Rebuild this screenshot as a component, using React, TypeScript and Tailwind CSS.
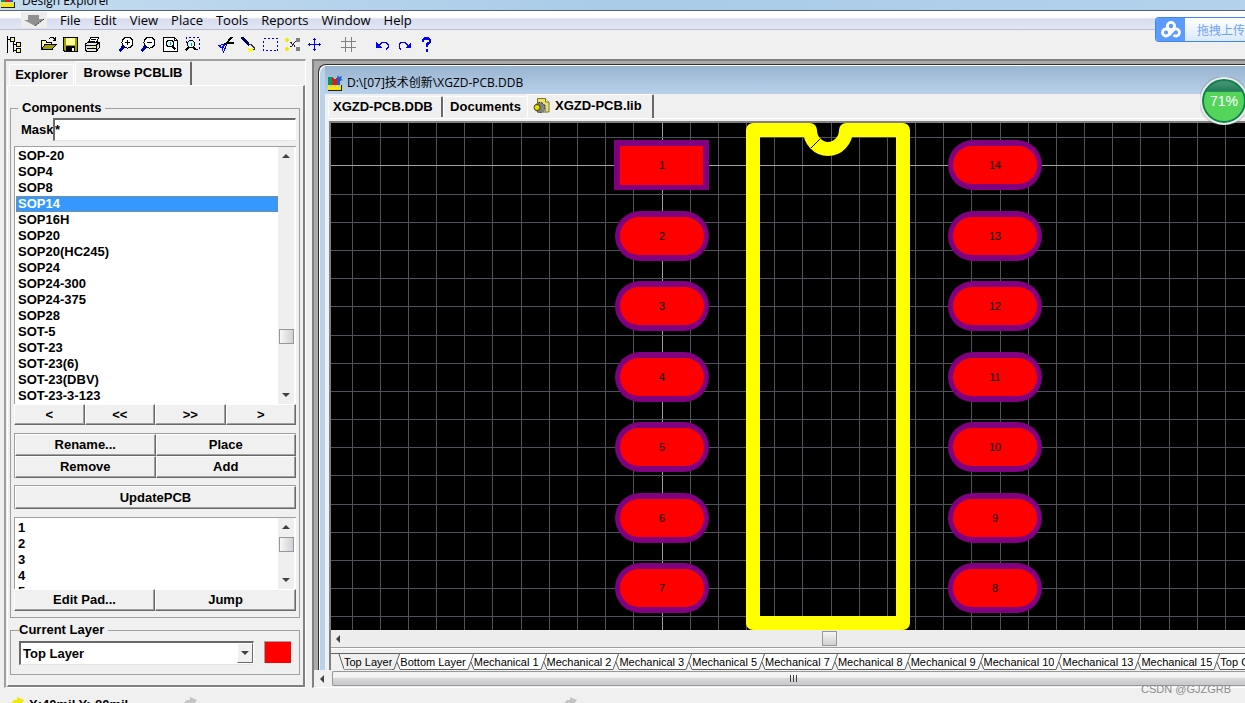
import { useState } from "react";
import type { ReactNode } from "react";

const components = [
  "SOP-20", "SOP4", "SOP8", "SOP14", "SOP16H", "SOP20", "SOP20(HC245)", "SOP24",
  "SOP24-300", "SOP24-375", "SOP28", "SOT-5", "SOT-23", "SOT-23(6)", "SOT-23(DBV)", "SOT-23-3-123",
];
const menus = ["File", "Edit", "View", "Place", "Tools", "Reports", "Window", "Help"];
const layers = [
  "Top Layer", "Bottom Layer", "Mechanical 1", "Mechanical 2", "Mechanical 3", "Mechanical 5",
  "Mechanical 7", "Mechanical 8", "Mechanical 9", "Mechanical 10", "Mechanical 13", "Mechanical 15",
  "Top Overlay",
];

// grid pitch and pad pitch in canvas units, origin is the centre of pad 1
const GRID = 28.17;
const PAD = 70.5;

const icons: { name: string; art: ReactNode }[][] = [
  [
    {
      name: "Panel",
      art: (
        <g fill="none" stroke="#000">
          <path d="M1.5 0v17M1.5 3.5h3M7.5 6v10M7.5 8.5h3M7.5 14.5h3" />
          <path d="M4.5 1.5h4v4h-4zM10.5 6.5h4v4h-4zM10.5 12.5h4v4h-4z" fill="#ffff66" />
        </g>
      ),
    },
  ],
  [
    {
      name: "Open",
      art: (
        <g stroke="#000">
          <path d="M1.5 13.5v-9h4l1 1.5h5v3" fill="#ffff99" />
          <path d="M1.5 13.5l3.5-5h11l-4 5z" fill="#a0a000" />
          <path d="M9 3l2-1.5h2l2 2M15.5 1v3h-3" fill="none" />
        </g>
      ),
    },
    {
      name: "Save",
      art: (
        <g>
          <path d="M1.5 1.5h14v14H3l-1.5-1.5z" fill="#a0a000" stroke="#000" />
          <path d="M4 2h9v7H4z" fill="#ffff99" />
          <path d="M4 10h9v6H4z" fill="#000" />
          <path d="M10 12h2v3h-2z" fill="#fff" />
        </g>
      ),
    },
    {
      name: "Print",
      art: (
        <g stroke="#000">
          <path d="M4.5 7l2-5.5h8L12.5 7" fill="#fff" />
          <path d="M7 3.5h5M6 5.5h5" />
          <path d="M1.5 8l2.5-2h11v6l-3 3.5H3L1.5 14z" fill="#e4e4e4" />
          <path d="M1.5 9.5h10.5l3-3M3 12.5h9M12.5 10v5" fill="none" />
          <path d="M8 11h2" stroke="#e0e000" />
        </g>
      ),
    },
  ],
  [
    {
      name: "Zoom In",
      art: (
        <g fill="none" stroke="#000">
          <circle cx="9.5" cy="6.5" r="5.5" fill="#fff" />
          <path d="M9.5 4v5M7 6.5h5" />
          <path d="M5.5 10.5l-4 4.5" stroke="#0000a8" strokeWidth="3" />
        </g>
      ),
    },
    {
      name: "Zoom Out",
      art: (
        <g fill="none" stroke="#000">
          <circle cx="9.5" cy="6.5" r="5.5" fill="#fff" />
          <path d="M7 6.5h5" />
          <path d="M5.5 10.5l-4 4.5" stroke="#0000a8" strokeWidth="3" />
        </g>
      ),
    },
    {
      name: "Fit Document",
      art: (
        <g fill="none" stroke="#000">
          <path d="M1.5 1.5h11l3 3v11h-14z" fill="#fff" />
          <path d="M12.5 1.5v3h3" />
          <circle cx="8" cy="7.5" r="3.5" fill="#d8f4f4" />
          <path d="M8 6v3" stroke="#00a0a0" />
          <path d="M10.5 10.5l3 3" strokeWidth="2" />
        </g>
      ),
    },
    {
      name: "Zoom Area",
      art: (
        <g fill="none" stroke="#000">
          <path d="M2.5 7V1.5h13v12H11" stroke="#0000a8" strokeDasharray="2 2" />
          <circle cx="7" cy="8" r="3.5" fill="#d8f4f4" />
          <path d="M7 6.5v3" stroke="#00a0a0" />
          <path d="M4.5 11l-3 3.5M9.5 11l2.5 3" strokeWidth="2" />
        </g>
      ),
    },
  ],
  [
    {
      name: "Cut",
      art: (
        <g fill="none" stroke="#000">
          <path d="M14 1L7 9" strokeWidth="2" />
          <path d="M16 7H9L6 9" strokeWidth="2" />
          <path d="M7 8l-6 1.5 2 2 4-2.5-3 4 1.5 3L8.5 9" stroke="#0000ff" />
        </g>
      ),
    },
    {
      name: "Paste",
      art: (
        <g>
          <path d="M1 1h2l6 6v3H8L1 3z" fill="#000060" />
          <path d="M9 8.5h2l3.5 3.5v1.5h-2" fill="none" stroke="#303030" />
          <path d="M8 12h2v1h2v-1h1v2h-1v2H8v-1h1v-1H8z" fill="#ffff00" />
        </g>
      ),
    },
    {
      name: "Select",
      art: <path d="M1.5 2.5h14v12h-14z" fill="none" stroke="#0000c0" strokeDasharray="2 2" />,
    },
    {
      name: "Deselect",
      art: (
        <g>
          <path d="M4 4l5 4.5L4 13M14 3L9 8.5l5 5.5" fill="none" stroke="#202020" strokeDasharray="2 1" />
          <path d="M2 2h2v1h1v2H4v1H2V5H1V3h1zM2 11h2v1h1v2H4v1H2v-1H1v-2h1z" fill="#f0e800" />
          <circle cx="14" cy="4" r="2.5" fill="#808080" />
          <circle cx="14" cy="13" r="2.5" fill="#808080" />
        </g>
      ),
    },
    {
      name: "Move",
      art: (
        <g stroke="#0000e0" fill="none">
          <path d="M8.5 2v13M2 8.5h13" />
          <path d="M7 3.5h3M7 13.5h3M3.5 7v3M13.5 7v3" />
        </g>
      ),
    },
  ],
  [
    {
      name: "Grid",
      art: <path d="M5.5 1v15M11.5 1v15M1 5.5h15M1 11.5h15" fill="none" stroke="#808080" />,
    },
  ],
  [
    {
      name: "Undo",
      art: (
        <g fill="none" stroke="#0000ff">
          <path d="M5 9.5l3-3h4l2 2v3l-2 2" />
          <path d="M2 6v6h6z" fill="#0000ff" stroke="none" />
        </g>
      ),
    },
    {
      name: "Redo",
      art: (
        <g fill="none" stroke="#0000ff">
          <path d="M12 9.5l-3-3H5l-2 2v3l2 2" />
          <path d="M15 6v6H9z" fill="#0000ff" stroke="none" />
        </g>
      ),
    },
    {
      name: "Help",
      art: (
        <g fill="none" stroke="#0000ff" strokeWidth="2.5">
          <path d="M5 6V4l2-1.5h3L12 4v2L9 8.5V11" />
          <path d="M9 13v2.5" />
        </g>
      ),
    },
  ],
];

function Arrow({ dir }: { dir: "up" | "down" | "left" }) {
  const d = { up: "M0 6l4-4 4 4z", down: "M0 2l4 4 4-4z", left: "M6 0L2 4l4 4z" }[dir];
  return (
    <svg width="8" height="8" viewBox="0 0 8 8" aria-hidden="true">
      <path d={d} fill="#404040" />
    </svg>
  );
}

function PushButton({ children }: { children: ReactNode }) {
  return (
    <button className="flex-1 border border-t-white border-l-white border-r-[#696969] border-b-[#696969] bg-[#f0f0f0] text-center font-bold leading-4 shadow-[inset_-1px_-1px_0_#a0a0a0]">
      {children}
    </button>
  );
}

function ScrollTrack({ gap }: { gap: string }) {
  return (
    <div className="mr-[2px] flex w-4 flex-col items-center bg-[#efefef] py-[5px]">
      <Arrow dir="up" />
      <div className={gap} />
      <div className="h-[15px] w-[15px] shrink-0 border border-[#979797] bg-gradient-to-r from-[#f6f6f6] to-[#d0d0d4]" />
      <div className="flex-1" />
      <Arrow dir="down" />
    </div>
  );
}

function AppLogo() {
  return (
    <svg width="16" height="16" viewBox="0 0 16 16" className="shrink-0" aria-hidden="true">
      <path d="M1 2h5v8H1z" fill="#109060" />
      <path d="M5 3h2v1h2V3h2v3h-1v2h1v3H9v-1H7v1H5V8h1V6H5z" fill="#e01818" />
      <path d="M11 0l1 2 3-1-1 3 2 1-3 1v4h-3V3z" fill="#1860d0" />
      <path d="M1 10h2v2h2v-2h2v2h2v-2h2v2h2v-2h1v5H1z" fill="#f8e800" />
      <path d="M1 15h13v1H1zM14 10h1v6h-1z" fill="#202020" />
    </svg>
  );
}

function LibIcon() {
  return (
    <svg width="17" height="16" viewBox="0 0 17 16" className="shrink-0" aria-hidden="true">
      <path d="M4.5.5h8l3.5 3.5v10H4.5z" fill="#e8e070" stroke="#807810" />
      <path d="M12.5.5v3.5h3.5" fill="#fff" stroke="#807810" />
      <circle cx="7" cy="9.5" r="5" fill="#808080" stroke="#303030" strokeDasharray="2 1" />
      <circle cx="4" cy="9.5" r="3" fill="#e8e000" stroke="#404000" />
      <path d="M10 8v7M12.5 7v8" stroke="#909090" />
    </svg>
  );
}

function StatusMark({ fill }: { fill: string }) {
  return (
    <svg width="14" height="10" viewBox="0 0 14 10" className="shrink-0" aria-hidden="true">
      <path d="M0 6l3-3h3V0l7 3-4 6H2z" fill={fill} />
    </svg>
  );
}

function Pad({ n, x, y }: { n: number; x: number; y: number }) {
  return (
    <g>
      {n === 1 ? (
        <>
          <rect x={x - 48} y={y - 25} width="95" height="50" fill="#800080" />
          <rect x={x - 42} y={y - 19} width="83" height="39" fill="#f00" />
        </>
      ) : (
        <>
          <rect x={x - 47} y={y - 25} width="94" height="50" rx="25" fill="#800080" />
          <rect x={x - 42} y={y - 19} width="84" height="38" rx="19" fill="#f00" />
        </>
      )}
      <text x={x} y={y + 4} textAnchor="middle" fontSize="11" fill="#000">
        {n}
      </text>
    </g>
  );
}

function Canvas() {
  const cols = Array.from({ length: 80 }, (_, i) => i - 11);
  const rows = Array.from({ length: 60 }, (_, i) => i - 1);
  const left = [1, 2, 3, 4, 5, 6, 7];

  return (
    <svg className="block h-full w-full bg-black" role="img" aria-label="SOP14 footprint">
      <g shapeRendering="crispEdges">
        {cols.map((c) => (
          <rect key={c} x={331 + Math.floor(c * GRID)} y="0" width="1" height="100%" fill={c === 0 ? "#a0a0a0" : "#50505e"} />
        ))}
        {rows.map((r) => (
          <rect key={r} x="0" y={42 + Math.ceil(r * GRID)} width="100%" height="1" fill={r === 0 ? "#a0a0a0" : "#50505e"} />
        ))}
      </g>
      <path
        d="M479 7H422V500H572V7H515A18 19 0 0 1 479 7"
        fill="none"
        stroke="#ff0"
        strokeWidth="14"
        strokeLinecap="round"
        strokeLinejoin="round"
      />
      <path d="M480 25l9-9" stroke="#000" />
      {left.map((n) => (
        <Pad key={n} n={n} x={331} y={42 + Math.round((n - 1) * PAD)} />
      ))}
      {left.map((n) => (
        <Pad key={n} n={15 - n} x={664} y={42 + Math.round((n - 1) * PAD)} />
      ))}
    </svg>
  );
}

function LayerTabs({ active, onPick }: { active: string; onPick: (l: string) => void }) {
  return (
    <div className="mt-1 flex h-[17px] border-t border-[#606060] text-[11px] leading-[14px]">
      <svg width="13" height="16" className="shrink-0" aria-hidden="true">
        <path d="M8 0l5 15" stroke="#606060" />
      </svg>
      {layers.map((l) => (
        <div key={l} className="flex shrink-0">
          <button
            onClick={() => onPick(l)}
            className={
              l === active
                ? "h-4 border-b border-[#909090] bg-[#f0f0f0]"
                : "h-4 border-b border-[#606060] bg-white"
            }
          >
            {l}
          </button>
          <svg width="8" height="16" aria-hidden="true">
            <path d="M0 0h7L2 15H0z" fill={l === active ? "#f0f0f0" : "#fff"} />
            <path d="M7 0h1v16L5 8z" fill="#fff" />
            <path d="M7.5 0L2 15.5H0M5 8l3 7.5" fill="none" stroke="#606060" />
          </svg>
        </div>
      ))}
    </div>
  );
}

export default function App() {
  const [selected, setSelected] = useState("SOP14");
  const [layer, setLayer] = useState("Top Layer");

  return (
    <div className="flex h-screen flex-col overflow-hidden bg-[#f0f0f0] font-['Liberation_Sans','Noto_Sans_CJK_SC',sans-serif] text-[13px] text-black">
      {/* title bar */}
      <header className="flex h-[11px] shrink-0 items-end overflow-hidden border-b border-[#58626e] bg-gradient-to-r from-[#c4dcf0] via-[#a9cbe8] to-[#b4d2ec] pb-[2px]">
        <AppLogo />
        <h1 className="ml-[6px] font-['Open_Sans','Noto_Sans',sans-serif] text-[12px] leading-[14px]">Design Explorer</h1>
      </header>

      {/* menu */}
      <nav className="flex h-[19px] shrink-0 items-center gap-[13px] border-b border-[#b8bccc] bg-gradient-to-b from-white from-35% via-[#d8dcee] via-45% to-[#e2e6f6] pl-[21px] font-['Open_Sans','Noto_Sans',sans-serif] text-[13px] leading-4">
        <button aria-label="System menu" className="flex h-4 w-[26px] items-center justify-center bg-[#ededed]">
          <svg width="22" height="11" viewBox="0 0 22 11" aria-hidden="true">
            <path d="M5 0h11v4h5l-9 7-11-6h4z" fill="#909090" />
            <path d="M21 4l-9 7" stroke="#303030" strokeDasharray="2 1" />
          </svg>
        </button>
        {menus.map((m) => (
          <button key={m}>{m}</button>
        ))}
      </nav>

      {/* toolbar */}
      <div className="flex h-[29px] shrink-0 items-center gap-3 pl-[3px]" role="toolbar">
        {icons.map((group, i) => (
          <div key={i} className="flex">
            {group.map((ic) => (
              <button key={ic.name} aria-label={ic.name} className="flex w-[22px] justify-center">
                <svg width="17" height="17" viewBox="0 0 17 17" shapeRendering="crispEdges">
                  {ic.art}
                </svg>
              </button>
            ))}
          </div>
        ))}
      </div>

      <main className="flex min-h-0 flex-1">
        {/* browse panel */}
        <aside className="ml-1 flex w-[302px] shrink-0 flex-col border-t-2 border-r border-b border-l-2 border-t-[#a0a0a0] border-r-white border-b-white border-l-[#a0a0a0]">
          <div className="flex h-6 shrink-0 items-end gap-px pl-[3px] font-bold">
            <button className="h-[21px] w-[65px] rounded-t-xs border-t border-r border-l border-white leading-5">Explorer</button>
            <button className="h-6 w-[117px] rounded-t-xs border-t border-r-2 border-l border-t-white border-r-[#696969] border-l-white pb-[2px]">Browse PCBLIB</button>
          </div>
          <div className="ml-px flex-1 border-t border-r-2 border-b-2 border-l border-t-white border-r-[#808080] border-b-[#808080] border-l-white pt-[14px] pr-[3px] pl-[2px]">
            <fieldset className="border border-[#a0a0a0] px-[3px] pb-[6px]">
              <legend className="ml-1 px-1 font-bold leading-4">Components</legend>
              <div className="mt-[2px] flex h-[23px]">
                <label htmlFor="mask" className="w-[39px] overflow-hidden pl-[7px] font-bold leading-6">Mask</label>
                <input
                  id="mask"
                  defaultValue="*"
                  className="min-w-0 flex-1 border-t-2 border-r border-b border-l-2 border-t-[#696969] border-r-white border-b-[#e3e3e3] border-l-[#696969] bg-white font-bold outline-none"
                />
              </div>

              <div className="mt-[5px] flex h-[258px] overflow-hidden border-t border-l border-[#a0a0a0] bg-white">
                <ul role="listbox" aria-label="Components" className="flex-1 pt-px pl-px font-bold leading-4">
                  {components.map((c) => (
                    <li
                      key={c}
                      role="option"
                      aria-selected={c === selected}
                      onClick={() => setSelected(c)}
                      className={c === selected ? "h-4 bg-[#3399ff] pl-[2px] text-white outline-1 -outline-offset-1 outline-dotted outline-[#b08050]" : "h-4 pl-[2px]"}
                    >
                      {c}
                    </li>
                  ))}
                </ul>
                <ScrollTrack gap="h-[169px]" />
              </div>
              <div className="flex h-[21px]">
                <PushButton>&lt;</PushButton>
                <PushButton>&lt;&lt;</PushButton>
                <PushButton>&gt;&gt;</PushButton>
                <PushButton>&gt;</PushButton>
              </div>

              <div className="mt-2 border-t border-l border-[#a0a0a0]">
                <div className="flex h-[22px]">
                  <PushButton>Rename...</PushButton>
                  <PushButton>Place</PushButton>
                </div>
                <div className="flex h-[22px]">
                  <PushButton>Remove</PushButton>
                  <PushButton>Add</PushButton>
                </div>
              </div>

              <div className="mt-[7px] flex h-[24px] border-t border-l border-[#a0a0a0]">
                <PushButton>UpdatePCB</PushButton>
              </div>

              <div className="mt-2 flex h-[72px] overflow-hidden border-t border-l border-[#a0a0a0] bg-white">
                <ul role="listbox" aria-label="Pads" className="flex-1 pt-[2px] pl-[3px] font-bold leading-4">
                  {[1, 2, 3, 4, 5].map((p) => (
                    <li key={p} role="option" aria-selected={false}>{p}</li>
                  ))}
                </ul>
                <ScrollTrack gap="h-[6px]" />
              </div>
              <div className="flex h-[22px]">
                <PushButton>Edit Pad...</PushButton>
                <PushButton>Jump</PushButton>
              </div>
            </fieldset>

            <fieldset className="mt-1 border border-[#a0a0a0] pr-2 pb-[9px] pl-2">
              <legend className="font-bold leading-4">
                <label htmlFor="layer" className="pr-1">Current Layer</label>
              </legend>
              <div className="mt-[3px] flex justify-between">
                <div className="relative w-[235px]">
                  <select
                    id="layer"
                    value={layer}
                    onChange={(e) => setLayer(e.target.value)}
                    className="h-6 w-full appearance-none border-t-2 border-r border-b border-l-2 border-t-[#696969] border-r-white border-b-[#e3e3e3] border-l-[#696969] bg-white pl-[2px] font-bold outline-none"
                  >
                    {layers.map((l) => (
                      <option key={l}>{l}</option>
                    ))}
                  </select>
                  <span className="pointer-events-none absolute top-[2px] right-px flex h-[20px] w-4 items-center justify-center border border-t-white border-r-[#696969] border-b-[#696969] border-l-white bg-[#f0f0f0]">
                    <Arrow dir="down" />
                  </span>
                </div>
                <button aria-label="Layer colour" className="h-[22px] w-[27px] border-t border-l border-[#a0a0a0] bg-[#ff0000]" />
              </div>
            </fieldset>
          </div>
        </aside>

        {/* document area */}
        <section className="ml-[6px] flex min-w-0 flex-1 flex-col border-t-2 border-b border-l-2 border-t-[#808080] border-b-white border-l-[#808080] bg-[#ababab]">
          <div className="mt-[3px] ml-1 flex min-h-0 flex-1 flex-col rounded-tl-lg border-t border-l border-[#303030] bg-[#b9d1ea] pl-[6px] shadow-[inset_1px_1px_0_#fff]">
            <div className="mt-px flex h-7 shrink-0 items-center bg-gradient-to-b from-[#99b4d1] to-[#b9d1ea] pt-[6px] pl-[2px] font-['Open_Sans','Noto_Sans_CJK_SC',sans-serif] text-[12px]">
              <AppLogo />
              <span className="ml-1">D:\[07]技术创新\XGZD-PCB.DDB</span>
            </div>

            <div className="flex min-h-0 flex-1 flex-col bg-[#f0f0f0] pl-[3px]">
              <div className="flex h-[25px] shrink-0 items-end border-b border-white font-bold">
                <button className="mb-px h-[21px] w-[115px] rounded-t-xs border-t border-r-2 border-l border-t-white border-r-[#696969] border-l-white pl-1 text-left">XGZD-PCB.DDB</button>
                <button className="mb-px h-[21px] w-[84px] rounded-t-xs border-t border-l border-white">Documents</button>
                <button className="flex h-6 w-[127px] items-center gap-[5px] rounded-t-xs border-t border-r-2 border-l border-t-white border-r-[#696969] border-l-white pb-[2px] pl-[5px]">
                  <LibIcon />
                  XGZD-PCB.lib
                </button>
              </div>
              <div className="mt-[2px] ml-px flex min-h-0 flex-1 flex-col border-t-2 border-l-2 border-[#808080]">
                <div className="min-h-0 flex-1 overflow-hidden">
                  <Canvas />
                </div>
                <div className="flex h-[18px] shrink-0 items-center border-b border-[#a0a0a0] bg-[#ededed] pl-[3px]">
                  <Arrow dir="left" />
                  <div className="ml-[480px] h-[15px] w-[15px] border border-[#979797] bg-gradient-to-b from-[#f6f6f6] to-[#d0d0d4]" />
                </div>
                <div className="shrink-0 overflow-hidden border-t border-white">
                  <LayerTabs active={layer} onPick={setLayer} />
                </div>
              </div>
            </div>
          </div>
          <div className="flex h-[17px] shrink-0 items-center bg-[#f0f0f0] pl-1">
            <Arrow dir="left" />
            <div className="ml-[6px] flex h-[15px] flex-1 items-center justify-center rounded-l-xs border border-r-0 border-[#979797] bg-gradient-to-b from-[#f4f4f4] from-40% via-[#d8d8da] via-50% to-[#c8c8cc] pl-2">
              <span className="flex gap-[2px]">
                <i className="h-[7px] w-px bg-[#404040]" />
                <i className="h-[7px] w-px bg-[#404040]" />
                <i className="h-[7px] w-px bg-[#404040]" />
              </span>
            </div>
          </div>
        </section>
      </main>

      {/* status bar */}
      <footer className="flex h-[15px] shrink-0 items-start overflow-hidden pt-[9px] pl-[11px] font-bold">
        <StatusMark fill="#f0e800" />
        <span className="ml-1 w-[155px] leading-4">X:40mil Y:-80mil</span>
        <StatusMark fill="#c4c4c4" />
        <span className="w-[366px]" />
        <StatusMark fill="#c4c4c4" />
      </footer>

      {/* floating desktop widgets */}
      <button className="absolute top-[17px] right-0 flex h-[25px] w-[90px] items-center overflow-hidden rounded-l-sm border border-r-0 border-[#3f86f4] bg-gradient-to-b from-white to-[#dbe9fd] whitespace-nowrap text-[#6fa2fb]">
        <span className="flex h-full w-[29px] shrink-0 items-center justify-center bg-[#5b9bfd]">
          <svg width="20" height="18" viewBox="0 0 20 18" fill="none" stroke="#fff" strokeWidth="2.8" aria-hidden="true">
            <circle cx="10" cy="5" r="3.6" />
            <circle cx="5" cy="11.5" r="3.5" />
            <path d="M8 14l4.5-5a3.5 3.5 0 1 1 0 5" />
          </svg>
        </span>
        <span className="ml-3 font-['Noto_Sans_CJK_SC',sans-serif] text-[12px]">拖拽上传</span>
      </button>
      <div className="absolute top-[77px] right-0 h-12 w-[45px] overflow-hidden">
        <div className="flex h-12 w-12 items-center justify-center rounded-full border-2 border-[#e8ecea] bg-gradient-to-b from-[#4f9c7c] via-[#1f7d58] via-28% to-[#55d45c] to-30% text-[14px] text-white shadow-[inset_0_0_0_2px_#118050,0_0_2px_#606060]">
          71%
        </div>
      </div>
      <span className="absolute right-[14px] bottom-[6px] text-[11px] leading-4 text-[#8c8c8c]">CSDN @GJZGRB</span>
    </div>
  );
}
